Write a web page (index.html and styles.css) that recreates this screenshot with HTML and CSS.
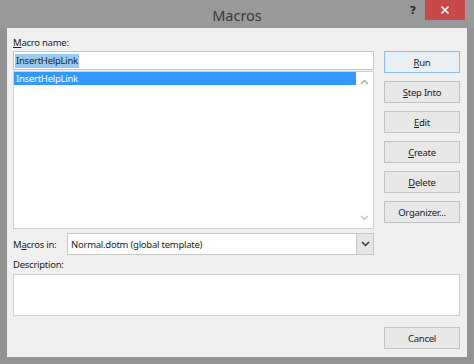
FILE: index.html
```html
<!DOCTYPE html>
<html>
<head>
<meta charset="utf-8">
<title>Macros</title>
<link rel="stylesheet" href="styles.css">
</head>
<body>
<div class="window">
  <div class="titlebar">
    <div class="spacer"></div>
    <div class="title">Macros</div>
    <div class="controls">
      <span class="help">?</span>
      <span class="close">
        <svg width="10" height="10" viewBox="0 0 10 10"><path d="M1.5 1.5 L8.5 8.5 M8.5 1.5 L1.5 8.5" stroke="#fff" stroke-width="1.6" fill="none"/></svg>
      </span>
    </div>
  </div>
  <div class="panel">
    <div class="main">
      <div class="left">
        <div class="lbl"><u>M</u>acro name:</div>
        <div class="input"><span class="sel">InsertHelpLink</span></div>
        <div class="list">
          <div class="items">
            <div class="item selected">InsertHelpLink</div>
          </div>
          <div class="scroll">
            <svg width="9" height="6" viewBox="0 0 9 6"><path d="M1 5 L4.5 1.5 L8 5" stroke="#a8a8a8" stroke-width="1.3" fill="none"/></svg>
            <svg width="9" height="6" viewBox="0 0 9 6"><path d="M1 1 L4.5 4.5 L8 1" stroke="#c4c4c4" stroke-width="1.3" fill="none"/></svg>
          </div>
        </div>
        <div class="in-row">
          <span class="in-lbl">M<u>a</u>cros in:</span>
          <div class="combo">
            <span class="combo-text">Normal.dotm (global template)</span>
            <span class="combo-btn">
              <svg width="9" height="6" viewBox="0 0 9 6"><path d="M1 1 L4.5 4.5 L8 1" stroke="#333" stroke-width="1.5" fill="none"/></svg>
            </span>
          </div>
        </div>
      </div>
      <div class="buttons">
        <div class="btn default"><u>R</u>un</div>
        <div class="btn"><u>S</u>tep Into</div>
        <div class="btn"><u>E</u>dit</div>
        <div class="btn"><u>C</u>reate</div>
        <div class="btn"><u>D</u>elete</div>
        <div class="btn">Organizer...</div>
      </div>
    </div>
    <div class="lbl desc-lbl">Description:</div>
    <div class="desc"></div>
    <div class="footer">
      <div class="btn">Cancel</div>
    </div>
  </div>
</div>
</body>
</html>
```

FILE: styles.css
```css
html, body {
  margin: 0;
  padding: 0;
}
body {
  width: 474px;
  height: 364px;
  background: #939393;
  font-family: "Noto Sans", "Open Sans", sans-serif;
  font-size: 9.5px;
  letter-spacing: -0.25px;
  color: #1e1e1e;
  overflow: hidden;
}
.window {
  display: flex;
  flex-direction: column;
  height: 364px;
}
.titlebar {
  height: 28px;
  display: grid;
  grid-template-columns: 1fr auto 1fr;
  background: #999999;
}
.title {
  font-size: 14.5px;
  letter-spacing: 0;
  color: #3a3a3a;
  line-height: 28px;
  padding-top: 1px;
}
.controls {
  display: flex;
  justify-content: flex-end;
  align-items: flex-start;
  padding-right: 9px;
}
.help {
  font-family: "DejaVu Sans", sans-serif;
  font-weight: bold;
  font-size: 11px;
  color: #2a2a2a;
  margin-right: 9px;
  margin-top: 4px;
}
.close {
  width: 40px;
  height: 20px;
  background: #c9494a;
  display: flex;
  align-items: center;
  justify-content: center;
}
.panel {
  margin: 0 7px 7px 7px;
  background: #f0f0f0;
  height: 329px;
  box-sizing: border-box;
  padding: 9px 7px 8px 6px;
  display: flex;
  flex-direction: column;
}
.main {
  display: flex;
  gap: 10px;
}
.left {
  width: 361px;
  display: flex;
  flex-direction: column;
}
.lbl {
  line-height: 12px;
  height: 12px;
}
.lbl u, .btn u, .in-lbl u {
  text-decoration-thickness: 1px;
  text-underline-offset: 1px;
}
.input {
  margin-top: 2px;
  height: 19px;
  box-sizing: border-box;
  border: 1px solid #c6c6c6;
  background: #fff;
  padding: 2px 1px;
  line-height: 13px;
}
.sel {
  background: #99c9ef;
  padding: 0 1px;
  display: inline-block;
  line-height: 14px;
}
.list {
  margin-top: 1px;
  height: 158px;
  box-sizing: border-box;
  border: 1px solid #d0d0d0;
  background: #fff;
  display: flex;
}
.items {
  flex: 1;
}
.item {
  height: 13px;
  line-height: 13px;
  padding-left: 2px;
}
.item.selected {
  background: #3399ff;
  color: #fff;
}
.scroll {
  width: 17px;
  display: flex;
  flex-direction: column;
  justify-content: space-between;
  align-items: center;
  padding: 7px 0 7px;
}
.in-row {
  margin-top: 4px;
  height: 22px;
  display: flex;
  align-items: center;
}
.in-lbl {
  width: 54px;
}
.combo {
  flex: 1;
  height: 22px;
  box-sizing: border-box;
  border: 1px solid #c6c6c6;
  background: #fff;
  display: flex;
  align-items: center;
}
.combo-text {
  flex: 1;
  padding-left: 3px;
}
.combo-btn {
  width: 16px;
  height: 20px;
  background: #e6e6e6;
  border-left: 1px solid #c6c6c6;
  display: flex;
  align-items: center;
  justify-content: center;
}
.buttons {
  width: 76px;
  padding-top: 14px;
  display: flex;
  flex-direction: column;
  gap: 8px;
}
.btn {
  width: 76px;
  height: 22px;
  box-sizing: border-box;
  border: 1px solid #c2c2c2;
  background: #e8e8e8;
  display: flex;
  align-items: center;
  justify-content: center;
  color: #222;
}
.btn.default {
  border: 1px solid #8fbce6;
  background: #e9eef3;
}
.desc-lbl {
  margin-top: 4px;
}
.desc {
  margin-top: 3px;
  height: 43px;
  box-sizing: border-box;
  border: 1px solid #d0d0d0;
  background: #fff;
}
.footer {
  margin-top: 11px;
  display: flex;
  justify-content: flex-end;
}
```
